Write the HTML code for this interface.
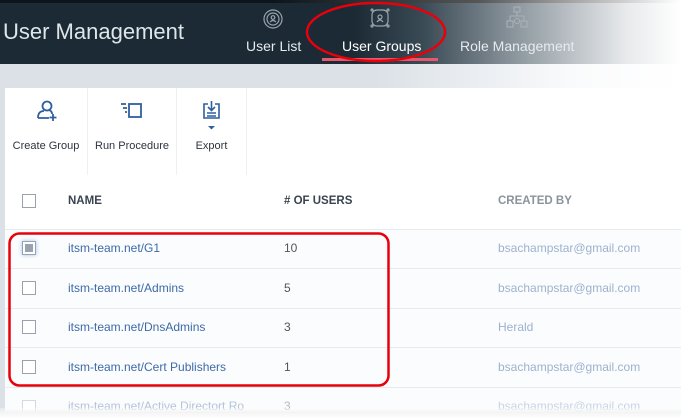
<!DOCTYPE html>
<html><head><style>
*{margin:0;padding:0;box-sizing:border-box}
body{width:681px;height:419px;overflow:hidden;position:relative;font-family:"Liberation Sans",Arial,sans-serif;background:#fff}
.hdr{position:absolute;left:0;top:0;width:681px;height:64px;background:linear-gradient(90deg,#1b2a35 0,#1b2a35 52%,#3a4a55 62%,#9aa3aa 78%,#e8eaec 92%,#fff 100%)}
.top{position:absolute;left:0;top:0;width:681px;height:3px;background:linear-gradient(90deg,#0c151b 40%,#555 70%,#fff 100%)}
.t{position:absolute;color:#e6ebee}
.band{position:absolute;left:0;top:64px;width:681px;height:355px;background:linear-gradient(90deg,#dbe1e7 0,#dbe1e7 55%,#fafbfc 85%,#fff 100%)}
.panel{position:absolute;left:5px;top:88px;width:676px;height:331px;background:#fff}
.tb{position:absolute;top:88px;height:87px;border-right:1px solid #eef0f2;text-align:center;font-size:11px;color:#2c3540}
.tb span{position:absolute;left:0;right:0;top:52px}
.row{position:absolute;left:5px;width:676px;border-top:1px solid #e8ebee;background:#fbfcfd}
.cb{position:absolute;left:22px;width:14px;height:14px;border:1px solid #9aa3ad;background:#fff}
.c{position:absolute;font-size:12px}
.n{left:68px;color:#3d6aa8}
.u{left:284px;color:#555}
.e{left:498px;color:#9db2cf}
.h{font-weight:bold;font-size:11.5px;color:#3a4450}
</style></head><body>
<div class="hdr"></div><div class="top"></div>
<div class="t" style="left:3px;top:19px;font-size:22px;color:#dfe6ea">User Management</div>
<svg style="position:absolute;left:262px;top:8px" width="22" height="22" viewBox="0 0 22 22" fill="none" stroke="#9aa5ad" stroke-width="1.2"><circle cx="11" cy="11" r="9"/><circle cx="11" cy="11" r="6"/><circle cx="11" cy="9.5" r="1.8"/><path d="M8 14q3-3 6 0"/></svg>
<div class="t" style="left:246px;top:38px;font-size:14px">User List</div>
<svg style="position:absolute;left:369px;top:7px" width="22" height="22" viewBox="0 0 22 22" fill="none" stroke="#9aa5ad" stroke-width="1.2"><rect x="3" y="3" width="16" height="16" rx="5"/><circle cx="11" cy="10" r="2"/><path d="M8 15q3-4 6 0"/><circle cx="3" cy="3" r="1"/><circle cx="19" cy="3" r="1"/><circle cx="3" cy="19" r="1"/><circle cx="19" cy="19" r="1"/></svg>
<div class="t" style="left:342px;top:38px;font-size:14px;color:#fff">User Groups</div>
<div style="position:absolute;left:322px;top:58px;width:116px;height:3px;background:#e8586a"></div>
<svg style="position:absolute;left:505px;top:5px" width="24" height="26" viewBox="0 0 24 26" fill="none" stroke="#aab1b6" stroke-width="1.1"><rect x="9" y="2" width="6" height="5"/><path d="M12 7v4M5 11h14M5 11v5M19 11v5"/><rect x="2" y="16" width="6" height="6"/><rect x="16" y="16" width="6" height="6"/><circle cx="12" cy="16" r="2.5"/></svg>
<div class="t" style="left:460px;top:38px;font-size:14px">Role Management</div>
<svg style="position:absolute;left:0;top:0" width="681" height="419"><ellipse cx="376" cy="32" rx="69" ry="29" fill="none" stroke="#e8000a" stroke-width="2.5"/></svg>
<div class="band"></div>
<div class="panel"></div>
<div class="tb" style="left:5px;width:83px"><svg style="position:absolute;left:30px;top:12px" width="24" height="22" viewBox="0 0 24 22" fill="none" stroke="#2f5f9e" stroke-width="1.8"><circle cx="12" cy="6" r="4.5"/><path d="M3 18q0-7 6-7M3 18h11M14 10q3 1 3 4"/><path d="M18 14v7M14.5 17.5h7"/></svg><span>Create Group</span></div>
<div class="tb" style="left:88px;width:89px"><svg style="position:absolute;left:32px;top:14px" width="24" height="18" viewBox="0 0 24 18" fill="none" stroke="#2f5f9e" stroke-width="1.8"><rect x="9" y="2" width="12" height="13"/><path d="M1 2h5M3 6h4M5 10h2"/></svg><span>Run Procedure</span></div>
<div class="tb" style="left:177px;width:70px"><svg style="position:absolute;left:24px;top:11px" width="22" height="34" viewBox="0 0 22 34" fill="none" stroke="#2f5f9e" stroke-width="1.6"><path d="M7 5H3v14h15V5h-4"/><path d="M10.5 2v9M7 8l3.5 3.5L14 8M6 14h9M6 17h9" /><path d="M7 27h7l-3.5 3.5z" fill="#2f5f9e" stroke="none"/></svg><span>Export</span></div>
<div class="cb" style="top:194px"></div>
<div class="c h" style="left:68px;top:195px">NAME</div>
<div class="c h" style="left:284px;top:195px"># OF USERS</div>
<div class="c h" style="left:498px;top:195px;color:#8a939c">CREATED BY</div>
<div class="row" style="top:229px;height:40px"></div>
<div class="row" style="top:268px;height:40px"></div>
<div class="row" style="top:308px;height:40px"></div>
<div class="row" style="top:347px;height:40px"></div>
<div class="row" style="top:387px;height:32px"></div>
<div class="cb" style="top:241px;box-shadow:0 0 4px #9cc0ea"><div style="margin:2px;width:8px;height:8px;background:#9aa3ad"></div></div>
<div class="c n" style="top:241px">itsm-team.net/G1</div><div class="c u" style="top:241px">10</div><div class="c e" style="top:241px">bsachampstar@gmail.com</div>
<div class="cb" style="top:281px"></div>
<div class="c n" style="top:281px">itsm-team.net/Admins</div><div class="c u" style="top:281px">5</div><div class="c e" style="top:281px">bsachampstar@gmail.com</div>
<div class="cb" style="top:320px"></div>
<div class="c n" style="top:320px">itsm-team.net/DnsAdmins</div><div class="c u" style="top:320px">3</div><div class="c e" style="top:320px">Herald</div>
<div class="cb" style="top:360px"></div>
<div class="c n" style="top:360px">itsm-team.net/Cert Publishers</div><div class="c u" style="top:360px">1</div><div class="c e" style="top:360px">bsachampstar@gmail.com</div>
<div class="cb" style="top:400px;border-color:#d5dae0"></div>
<div class="c n" style="top:399px;color:#b5c4da">itsm-team.net/Active Directort Ro</div><div class="c u" style="top:399px;color:#bbb">3</div><div class="c e" style="top:399px;color:#c9d5e5">bsachampstar@gmail.com</div>
<div style="position:absolute;left:0;top:408px;width:681px;height:11px;background:linear-gradient(180deg,rgba(255,255,255,0.3),#f4f4f4 40%,#fff)"></div>
<svg style="position:absolute;left:0;top:0" width="681" height="419"><rect x="9.5" y="233.5" width="379" height="152" rx="10" fill="none" stroke="#e8000a" stroke-width="2.5"/></svg>
</body></html>
